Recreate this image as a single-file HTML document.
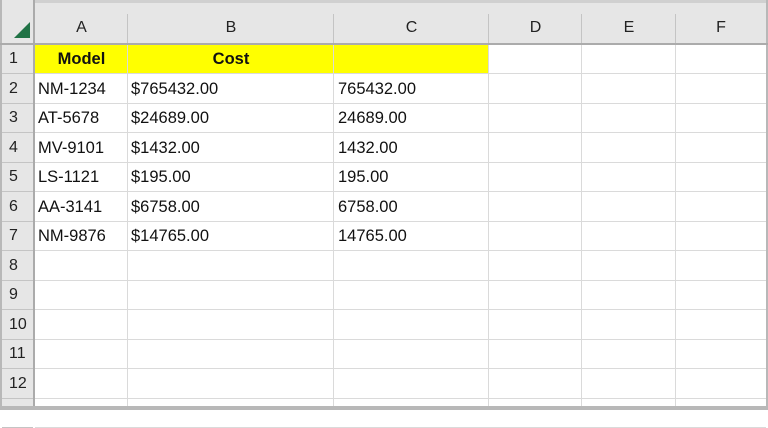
<!DOCTYPE html><html><head><style>
body{margin:0;width:768px;height:410px;overflow:hidden;background:#fff;font-family:"Liberation Sans",Arial,sans-serif;position:relative}
.a{position:absolute}
.h{background:#e6e6e6;color:#222;font-size:16px;text-align:center}
.t{position:absolute;font-size:16.5px;color:#111;white-space:nowrap}
</style></head><body>
<div class="a" style="left:0;top:0;width:768px;height:45px;background:#e6e6e6"></div>
<div class="a" style="left:0;top:0;width:768px;height:3px;background:#d0d0d0"></div>
<div class="a" style="left:0;top:0;width:34px;height:410px;background:#e6e6e6"></div>
<div class="a" style="left:0;top:0;width:2px;height:410px;background:#b8b8b8"></div>
<div class="a" style="left:766px;top:0;width:2px;height:410px;background:#b8b8b8"></div>
<div class="a" style="left:35px;top:45px;width:454px;height:29px;background:#ffff00"></div>
<div id="g"></div>
<div class="a" style="left:0;top:43px;width:768px;height:2px;background:#ababab"></div>
<div class="a" style="left:33px;top:0;width:2px;height:410px;background:#ababab"></div>
<div class="a" style="left:0;top:406px;width:768px;height:4px;background:#b8b8b8"></div>
<svg class="a" style="left:12px;top:20px" width="20" height="20"><polygon points="18,2 18,18 2,18" fill="#217346"/></svg>
<script>
var cols=[35,128,334,489,582,676,766],names=['A','B','C','D','E','F'];
var h='';
for(var i=0;i<6;i++){h+='<div class="a h" style="left:'+cols[i]+'px;top:16px;width:'+(cols[i+1]-cols[i])+'px;height:24px;line-height:24px">'+names[i]+'</div>';
if(i>0)h+='<div class="a" style="left:'+(cols[i]-1)+'px;top:14px;width:1px;height:30px;background:#c4c4c4"></div><div class="a" style="left:'+(cols[i]-1)+'px;top:45px;width:1px;height:362px;background:#dadada"></div>';}
for(var r=0;r<13;r++){var y=Math.round(45+r*29.5);
h+='<div class="a" style="left:35px;top:'+(y+28)+'px;width:731px;height:1px;background:#dadada"></div>';
h+='<div class="a" style="left:2px;top:'+(y+28)+'px;width:31px;height:1px;background:#c4c4c4"></div>';
if(r<12)h+='<div class="a h" style="left:2px;top:'+y+'px;width:30px;height:28px;line-height:28px;text-align:left;padding-left:7px;box-sizing:border-box">'+(r+1)+'</div>';}
var d=[['NM-1234','$765432.00','765432.00'],['AT-5678','$24689.00','24689.00'],['MV-9101','$1432.00','1432.00'],['LS-1121','$195.00','195.00'],['AA-3141','$6758.00','6758.00'],['NM-9876','$14765.00','14765.00']];
for(var r=0;r<6;r++){var y=Math.round(45+(r+1)*29.5)+5;
h+='<div class="t" style="left:38px;top:'+y+'px">'+d[r][0]+'</div><div class="t" style="left:131px;top:'+y+'px">'+d[r][1]+'</div><div class="t" style="left:338px;top:'+y+'px">'+d[r][2]+'</div>';}
h+='<div class="t" style="left:35px;width:93px;text-align:center;top:50px;font-weight:bold">Model</div><div class="t" style="left:128px;width:206px;text-align:center;top:50px;font-weight:bold">Cost</div>';
document.getElementById('g').innerHTML=h;
</script>
</body></html>
